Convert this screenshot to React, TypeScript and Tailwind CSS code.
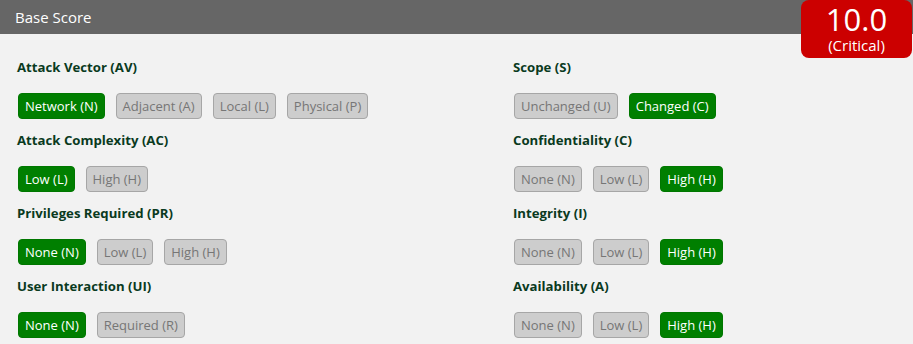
import React from "react";

type Metric = { title: string; options: string[]; selected: number };

const left: Metric[] = [
  { title: "Attack Vector (AV)", options: ["Network (N)", "Adjacent (A)", "Local (L)", "Physical (P)"], selected: 0 },
  { title: "Attack Complexity (AC)", options: ["Low (L)", "High (H)"], selected: 0 },
  { title: "Privileges Required (PR)", options: ["None (N)", "Low (L)", "High (H)"], selected: 0 },
  { title: "User Interaction (UI)", options: ["None (N)", "Required (R)"], selected: 0 },
];

const right: Metric[] = [
  { title: "Scope (S)", options: ["Unchanged (U)", "Changed (C)"], selected: 1 },
  { title: "Confidentiality (C)", options: ["None (N)", "Low (L)", "High (H)"], selected: 2 },
  { title: "Integrity (I)", options: ["None (N)", "Low (L)", "High (H)"], selected: 2 },
  { title: "Availability (A)", options: ["None (N)", "Low (L)", "High (H)"], selected: 2 },
];

function Column({ items }: { items: Metric[] }) {
  return (
    <div className="flex flex-col gap-[11px]">
      {items.map((m) => (
        <div key={m.title} className="flex flex-col">
          <h4 className="h-[36px] text-[13.2px] font-bold leading-5 text-[#0a3a1e]">{m.title}</h4>
          <div className="flex gap-[11px] pl-px">
            {m.options.map((o, i) =>
              i === m.selected ? (
                <span
                  key={o}
                  className="h-[26px] rounded-[4px] border border-[#007700] bg-[#007f00] px-[6px] text-[13px] leading-[24px] text-white"
                >
                  {o}
                </span>
              ) : (
                <span
                  key={o}
                  className="h-[26px] rounded-[4px] border border-[#a6a6a6] bg-[#cdcdcd] px-[6px] text-[13px] leading-[24px] text-[#767676]"
                >
                  {o}
                </span>
              )
            )}
          </div>
        </div>
      ))}
    </div>
  );
}

export default function App() {
  return (
    <div className="relative h-[344px] w-[913px] overflow-hidden bg-[#f2f2f2] font-['Open_Sans',sans-serif]">
      <div className="flex h-[34px] items-center bg-[#666666] px-[15px] text-[15px] text-white">Base Score</div>
      <div className="absolute right-[1px] top-0 flex h-[58px] w-[111px] flex-col items-center rounded-[8px] bg-[#cc0000] pt-[3px] text-white">
        <span className="text-[31px] leading-[33px]">10.0</span>
        <span className="text-[15px] leading-[18px]">(Critical)</span>
      </div>
      <div className="grid grid-cols-[496px_1fr] px-[17px] pt-[23px]">
        <Column items={left} />
        <Column items={right} />
      </div>
    </div>
  );
}
